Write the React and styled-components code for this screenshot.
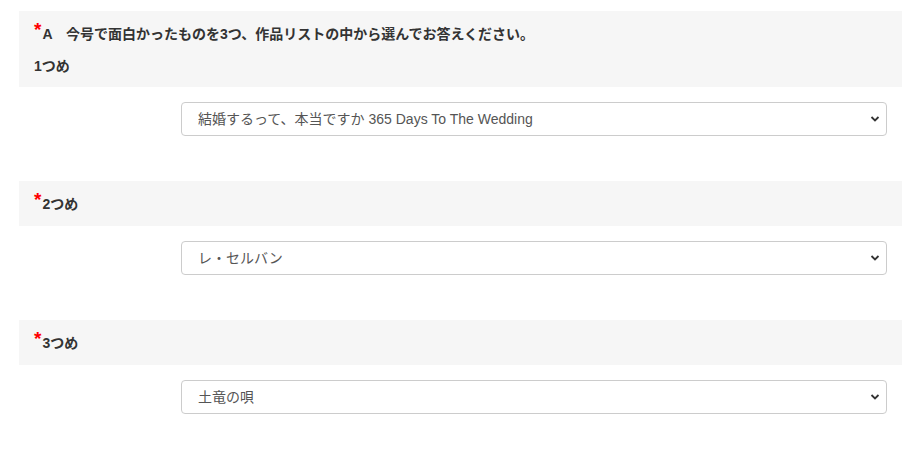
import styled, { createGlobalStyle } from "styled-components";

const GlobalStyle = createGlobalStyle`
  body {
    margin: 0;
    background: #ffffff;
    font-family: "Liberation Sans", "Noto Sans CJK JP", sans-serif;
  }
`;

const Page = styled.div`
  padding: 11px 16px 0 19px;
`;

const Question = styled.div`
  margin-bottom: 45px;
`;

const Heading = styled.div`
  background-color: #f6f6f6;
  padding: 13px 15px 11px;
  display: flex;
  flex-direction: column;
  gap: 11px;
`;

const Label = styled.div`
  font-size: 14px;
  font-weight: 700;
  line-height: 21px;
  color: #333333;
`;

const SubLabel = styled(Label)`
  line-height: 20px;
`;

const Required = styled.span`
  color: #ff0000;
  font-size: 19px;
  line-height: 0;
  position: relative;
  top: -3px;
  margin-right: 1px;
`;

const Field = styled.div`
  padding: 15px 15px 0 162px;
`;

const SelectWrap = styled.div`
  position: relative;
`;

const Select = styled.select`
  width: 100%;
  height: 34px;
  appearance: none;
  border: 1px solid #cccccc;
  border-radius: 4px;
  background: #ffffff;
  padding: 0 30px 0 16px;
  font-family: "Liberation Sans", "Noto Sans CJK JP", sans-serif;
  font-size: 14px;
  color: #555555;
  outline: none;
`;

const Chevron = styled.svg`
  position: absolute;
  right: 7px;
  top: 13px;
  pointer-events: none;
`;

const questions = [
  {
    title: "A　今号で面白かったものを3つ、作品リストの中から選んでお答えください。",
    sub: "1つめ",
    value: "結婚するって、本当ですか 365 Days To The Wedding",
  },
  { title: "2つめ", value: "レ・セルバン" },
  { title: "3つめ", value: "土竜の唄" },
];

const App = () => {
  return (
    <Page>
      <GlobalStyle />
      {questions.map((q) => (
        <Question key={q.title}>
          <Heading>
            <Label>
              <Required>*</Required>
              {q.title}
            </Label>
            {q.sub && <SubLabel>{q.sub}</SubLabel>}
          </Heading>
          <Field>
            <SelectWrap>
              <Select defaultValue={q.value}>
                <option value={q.value}>{q.value}</option>
              </Select>
              <Chevron width="10" height="8" viewBox="0 0 10 8">
                <path d="M1.5 2 L5 5.5 L8.5 2" fill="none" stroke="#333" strokeWidth="1.8" />
              </Chevron>
            </SelectWrap>
          </Field>
        </Question>
      ))}
    </Page>
  );
};

export default App;
